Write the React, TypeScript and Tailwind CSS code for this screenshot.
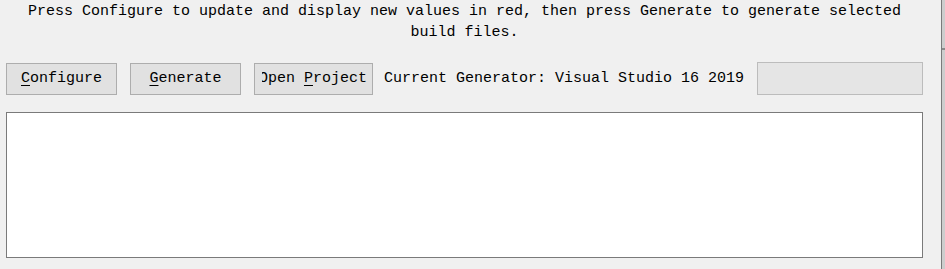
import React from 'react';

const mono = { fontFamily: '"Liberation Mono", "DejaVu Sans Mono", monospace' };

// 단축키 글자에 밑줄
function Mnemonic({ text, index }: { text: string; index: number }) {
  return (
    <>
      {text.slice(0, index)}
      <span className="underline underline-offset-[3px] decoration-1">{text[index]}</span>
      {text.slice(index + 1)}
    </>
  );
}

function Button({ children, width }: { children: React.ReactNode; width: string }) {
  return (
    <div
      className={`${width} h-[32px] shrink-0 flex items-center justify-center bg-[#e1e1e1] border border-[#adadad] text-black`}
    >
      {children}
    </div>
  );
}

export default function App() {
  return (
    <div
      className="w-[945px] h-[269px] bg-[#f0f0f0] flex overflow-hidden text-[15px] leading-[21px] text-black"
      style={mono}
    >
      <div className="w-[941px] flex flex-col pl-[6px] pr-[18px]">
        {/* 안내 문구 */}
        <p className="text-center pt-[1px] px-[10px] whitespace-pre-wrap">
          Press Configure to update and display new values in red, then press Generate to generate selected{'\n'}build files.
        </p>

        {/* 버튼 줄 */}
        <div className="flex items-center mt-[19px] h-[33px]">
          <Button width="w-[111px]">
            <Mnemonic text="Configure" index={0} />
          </Button>
          <div className="w-[13px]" />
          <Button width="w-[111px]">
            <Mnemonic text="Generate" index={0} />
          </Button>
          <div className="w-[13px]" />
          <div className="w-[119px] h-[32px] shrink-0 flex items-center justify-end pr-[5px] bg-[#e1e1e1] border border-[#adadad]">
            <div className="w-[105px] overflow-hidden flex justify-end">
              <span className="whitespace-pre shrink-0">
                Open <Mnemonic text="Project" index={0} />
              </span>
            </div>
          </div>
          <span className="ml-[11px] whitespace-pre">Current Generator: Visual Studio 16 2019</span>
          <div className="ml-[13px] flex-1 h-[33px] bg-[#e5e5e5] border border-[#bcbcbc]" />
        </div>

        {/* 출력 영역 */}
        <div className="mt-[17px] h-[146px] bg-white border border-[#7a7a7a]" />
      </div>

      {/* 오른쪽 분할선 */}
      <div className="w-[4px] h-full border-l border-[#7b7b7b] bg-[#cdcdcd] flex flex-col">
        <div className="h-[48px]" />
        <div className="h-[2px] bg-[#8a8a8a]" />
      </div>
    </div>
  );
}
